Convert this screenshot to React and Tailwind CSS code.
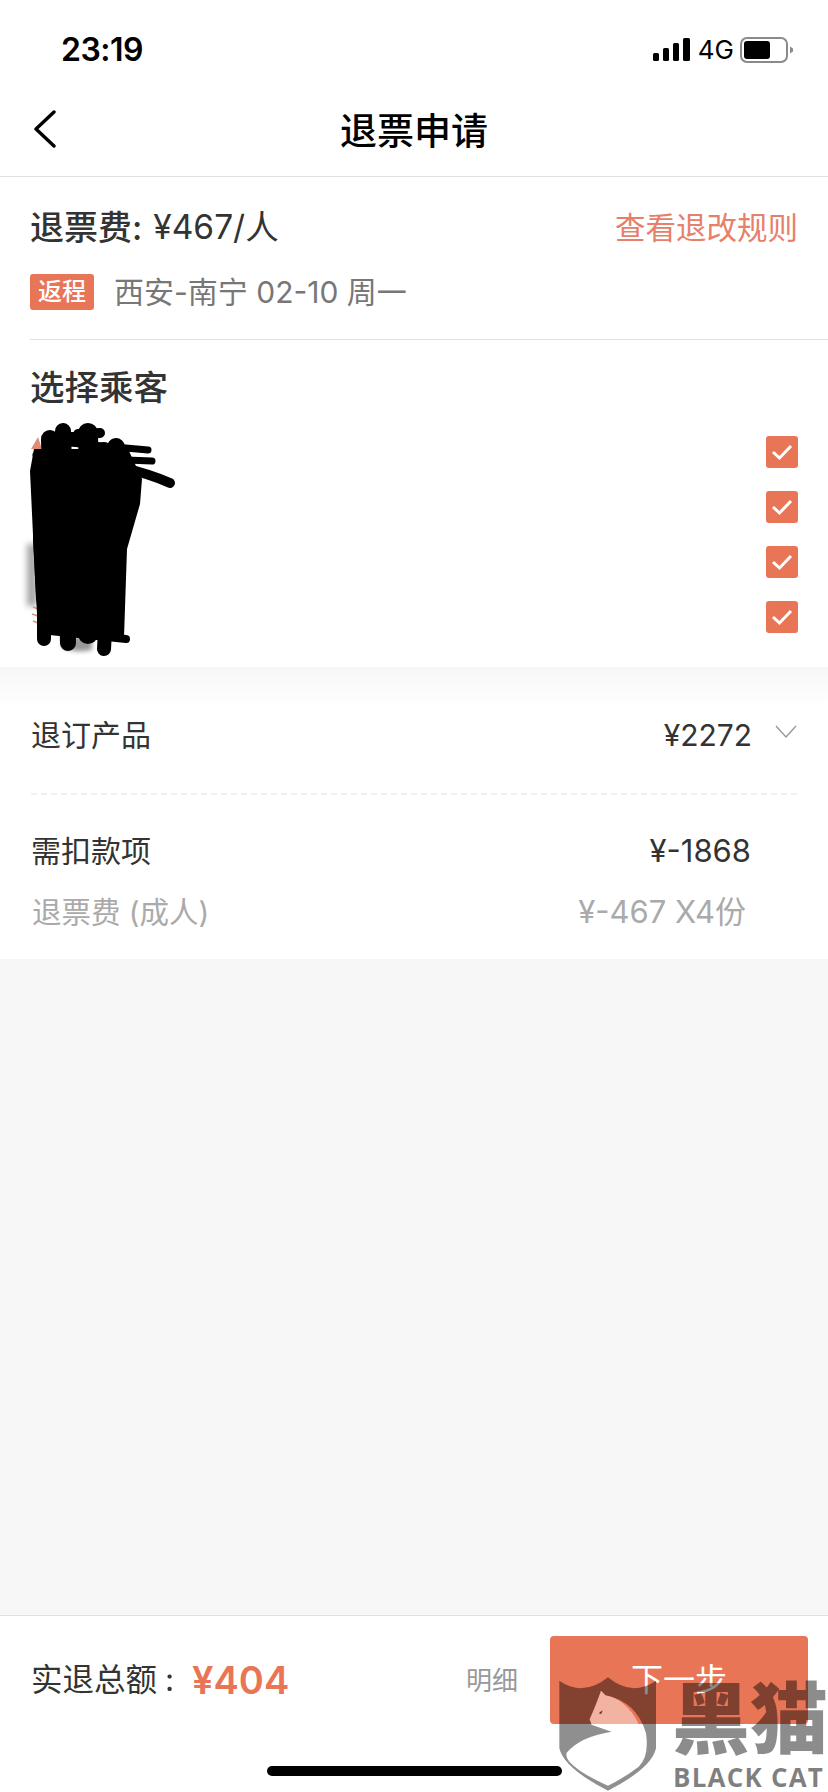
import React from 'react';

function StatusIcons() {
    return (
        <div className="flex items-center">
            <svg width="38" height="24" viewBox="0 0 38 24" className="block">
                <rect x="0" y="15" width="6" height="8" rx="1.5" fill="#000" />
                <rect x="10" y="10" width="6" height="13" rx="1.5" fill="#000" />
                <rect x="20" y="5" width="6" height="18" rx="1.5" fill="#000" />
                <rect x="30" y="0" width="7" height="23" rx="1.5" fill="#000" />
            </svg>
            <span className="ml-[7px] text-[26px] leading-none text-black">4G</span>
            <svg width="54" height="26" viewBox="0 0 54 26" className="block ml-[6px]">
                <rect x="1" y="1" width="46" height="24" rx="6" fill="none" stroke="#8a8a8a" strokeWidth="2" />
                <rect x="4" y="4" width="26" height="18" rx="3" fill="#000" />
                <path d="M50 9.5 L53 11.5 L53 14.5 L50 16.5 Z" fill="#8a8a8a" />
            </svg>
        </div>
    );
}

function Scribble() {
    return (
        <svg width="200" height="260" viewBox="0 0 200 260" className="absolute left-0 top-[-27px] pointer-events-none">
            {/* gray smudge and salmon text poking out from under the marker */}
            <rect x="27" y="135" width="10" height="62" fill="#a5a5a5" className="blur-[3px]" />
            <path d="M62 228 H92 V241 Q75 245 62 238 Z" fill="#999" className="blur-[2px]" />
            <path d="M31 40 L38 28 L42 40 Z M76 28 L90 26 L84 40 Z" fill="#e08d78" />
            <path d="M33 198 L38 200 M32 205 L38 207 M33 212 L38 214" stroke="#e08d78" strokeWidth="1.5" />
            <path d="M50 205 L60 213 L50 214 Z" fill="#eeb7a8" />
            {/* marker strokes */}
            <path d="M30 62 L34 40 L128 40 L142 70 L140 95 L127 140 L124 228 L44 222 L36 190 Z" fill="#000" />
            <g fill="none" stroke="#000" strokeLinecap="round" strokeLinejoin="round">
                <path d="M40 60 L40 130 L44 205 L44 230" strokeWidth="14" />
                <path d="M50 30 L52 120 L56 200" strokeWidth="18" />
                <path d="M63 22 L66 130 L68 234" strokeWidth="16" />
                <path d="M88 24 L90 130 L88 225" strokeWidth="20" />
                <path d="M104 240 L110 130 L104 40" strokeWidth="14" />
                <path d="M116 38 L120 90" strokeWidth="18" />
                <path d="M78 25 L100 24 M55 28 L80 28" strokeWidth="10" />
                <path d="M36 46 L70 34 L148 41" strokeWidth="7" />
                <path d="M100 50 L152 52" strokeWidth="7" />
                <path d="M120 58 Q150 65 170 74" strokeWidth="10" />
                <path d="M50 222 L126 230" strokeWidth="8" />
            </g>
        </svg>
    );
}

function Watermark() {
    return (
        <div className="absolute left-[540px] top-[1620px] w-[288px] h-[172px] pointer-events-none">
            <svg width="288" height="172" viewBox="0 0 864 516" className="absolute left-0 top-0">
                <path
                    fillRule="evenodd"
                    fill="#000"
                    fillOpacity="0.44"
                    d="M58 182 Q130 232 204 172 Q276 232 348 182 L348 385 Q335 445 204 512 Q72 445 58 385 Z
                       M183 212 L196 226 Q290 245 318 340 Q328 410 296 440 Q250 475 204 497 Q120 460 88 425 Q76 410 80 398 Q120 350 215 335 L155 314 L149 298 Q170 250 183 212 Z"
                />
                <path
                    fill="#fff"
                    fillOpacity="0.45"
                    d="M183 212 L196 226 Q260 238 296 312 L215 335 L155 314 L149 298 Q170 250 183 212 Z"
                />
                <path d="M176 280 L188 270 L184 282 Z" fill="#6b3328" />
            </svg>
            <div className="absolute left-[132px] top-[58px] w-[156px] flex text-[78px] leading-[84px] font-black text-black/45 whitespace-nowrap">
                黑猫
            </div>
            <div className="absolute left-[133px] top-[144px] text-[26px] leading-[26px] font-bold tracking-[1.2px] text-black/50 whitespace-nowrap [font-family:'Open_Sans',sans-serif]">
                BLACK CAT
            </div>
        </div>
    );
}

export default function App() {
    const passengers = [1, 2, 3, 4];

    return (
        <div className="relative w-[828px] h-[1792px] overflow-hidden flex flex-col bg-[#f7f7f7] [font-family:Inter,'Noto_Sans_CJK_SC',sans-serif]">
            {/* status bar */}
            <div className="h-[88px] bg-white flex items-center justify-between pl-[61px] pr-[34px] pt-[12px]">
                <span className="text-[32px] leading-none font-semibold text-black tracking-[-0.5px]">23:19</span>
                <StatusIcons />
            </div>

            {/* nav */}
            <div className="relative h-[89px] bg-white border-b border-[#e0e0e0] flex items-center justify-center">
                <svg width="24" height="38" viewBox="0 0 24 38" className="absolute left-[33px] top-[22px]">
                    <path d="M21 2 L3 19 L21 36" fill="none" stroke="#000" strokeWidth="3.4" strokeLinecap="round" strokeLinejoin="round" />
                </svg>
                <h1 className="text-[37px] leading-none font-medium text-black pb-[2px]">退票申请</h1>
            </div>

            {/* fee */}
            <div className="bg-white h-[163px] flex flex-col">
                <div className="flex-1 flex flex-col pl-[30px] pr-[31px]">
                    <div className="flex items-center justify-between h-[50px] mt-[26px]">
                        <div className="flex items-center text-[33px] leading-none text-[#333]">
                            <span className="text-[34px] font-medium mr-[11px]">退票费:</span>
                            <span className="text-[33.5px]">¥467/人</span>
                        </div>
                        <span className="text-[30.5px] leading-none text-[#e6806a] mr-[-1px]">查看退改规则</span>
                    </div>
                    <div className="flex items-center mt-[21px]">
                        <span className="w-[64px] h-[36px] rounded-[3px] bg-[#e97557] text-white text-[24px] leading-none flex items-center justify-center font-medium">返程</span>
                        <span className="ml-[20px] text-[30px] leading-none text-[#777]">西安-南宁 02-10 周一</span>
                    </div>
                </div>
                <div className="ml-[30px] h-px bg-[#e0e0e0]"></div>
            </div>

            {/* passengers */}
            <div className="bg-white h-[327px] pt-[29px] px-[30px]">
                <h2 className="text-[34.5px] leading-[38px] font-medium text-[#333]">选择乘客</h2>
                <div className="relative mt-[29px] flex flex-col gap-[23px] items-end">
                    {passengers.map((p) => (
                        <div key={p} className="w-[32px] h-[32px] rounded-[3px] bg-[#e97557] flex items-center justify-center">
                            <svg width="24" height="20" viewBox="0 0 24 20">
                                <path d="M3 10 L9.5 16 L21 4" fill="none" stroke="#fff" strokeWidth="3" />
                            </svg>
                        </div>
                    ))}
                    <div className="absolute left-[-30px] top-0">
                        <Scribble />
                    </div>
                </div>
            </div>

            {/* amounts */}
            <div className="h-[292px] bg-gradient-to-b from-[#f7f7f7] to-white to-[14%] relative">
                <div className="absolute inset-x-0 top-[40px] bottom-0 bg-white"></div>
                <div className="relative flex flex-col h-full">
                    <div className="h-[128px] mx-[31px] flex items-center justify-between border-b-2 border-dashed border-[#f0f0f0] pt-[9px]">
                        <span className="text-[30px] leading-none text-[#333]">退订产品</span>
                        <div className="flex items-center">
                            <span className="text-[30px] leading-none text-[#333]">¥2272</span>
                            <svg width="22" height="13" viewBox="0 0 22 13" className="ml-[23px] mb-[6px] block">
                                <path d="M1 1 L11 12 L21 1" fill="none" stroke="#999" strokeWidth="1.4" />
                            </svg>
                        </div>
                    </div>
                    <div className="mx-[31px] mt-[36px] flex items-center justify-between pr-[46px]">
                        <span className="text-[30px] leading-[40px] text-[#333]">需扣款项</span>
                        <span className="text-[31px] leading-[40px] text-[#333]">¥-1868</span>
                    </div>
                    <div className="mx-[31px] mt-[21px] flex items-center justify-between pr-[51px]">
                        <span className="text-[29.5px] leading-[40px] text-[#aaa] ml-[1px]">退票费 (成人)</span>
                        <span className="text-[31px] leading-[40px] text-[#aaa]">¥-467 X4份</span>
                    </div>
                </div>
            </div>

            <div className="flex-1 bg-[#f7f7f7]"></div>

            {/* footer */}
            <div className="relative h-[177px] bg-white border-t border-[#e0e0e0] pt-[20px] pl-[31px] pr-[20px]">
                <div className="flex items-center justify-between">
                    <div className="flex items-center">
                        <span className="text-[31.5px] leading-none text-[#333] mr-[4px]">
                            实退总额<span className="ml-[8px]">:</span>
                        </span>
                        <span className="ml-[14px] text-[38px] leading-none font-semibold text-[#e97557]">¥404</span>
                    </div>
                    <div className="flex items-center">
                        <span className="text-[26px] leading-none text-[#999] mr-[32px] mt-[2px]">明细</span>
                        <button className="w-[258px] h-[88px] rounded-[4px] bg-[#e97557] text-white text-[32px] leading-none">下一步</button>
                    </div>
                </div>
                <div className="absolute left-[267px] top-[150px] w-[295px] h-[10px] rounded-full bg-black"></div>
            </div>

            <Watermark />
        </div>
    );
}
